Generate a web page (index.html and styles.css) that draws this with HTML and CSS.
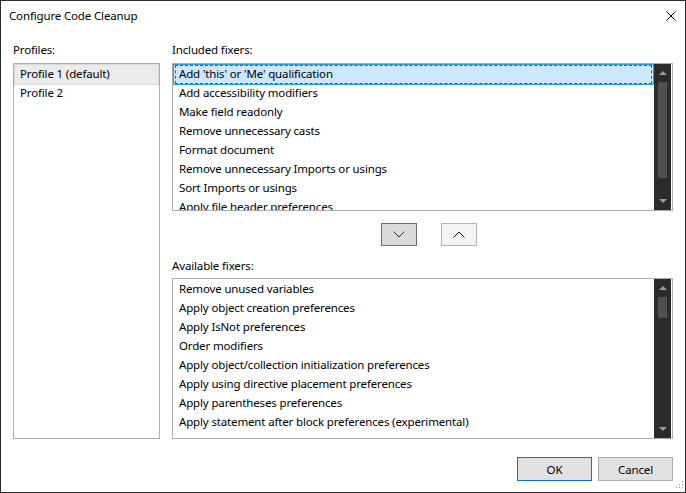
FILE: index.html
```html
<!DOCTYPE html>
<html>
<head>
<meta charset="utf-8">
<title>Configure Code Cleanup</title>
<link rel="stylesheet" href="styles.css">
</head>
<body>
<div class="window">
  <div class="titlebar">
    <span class="title">Configure Code Cleanup</span>
    <svg class="close" width="10" height="10" viewBox="0 0 10 10"><path d="M0.5 0.5 L9.5 9.5 M9.5 0.5 L0.5 9.5" stroke="#000" stroke-width="1" fill="none"/></svg>
  </div>
  <div class="main">
    <div class="col-left">
      <div class="label">Profiles:</div>
      <div class="list list-profiles">
        <div class="items">
          <div class="row row-sel-gray">Profile 1 (default)</div>
          <div class="row">Profile 2</div>
        </div>
      </div>
    </div>
    <div class="col-right">
      <div class="label">Included fixers:</div>
      <div class="list list-included">
        <div class="items">
          <div class="row row-sel-blue"><span class="focus">Add 'this' or 'Me' qualification</span></div>
          <div class="row">Add accessibility modifiers</div>
          <div class="row">Make field readonly</div>
          <div class="row">Remove unnecessary casts</div>
          <div class="row">Format document</div>
          <div class="row">Remove unnecessary Imports or usings</div>
          <div class="row">Sort Imports or usings</div>
          <div class="row">Apply file header preferences</div>
        </div>
        <div class="scrollbar">
          <div class="arrow arrow-up"></div>
          <div class="track track-included"><div class="thumb thumb-included"></div></div>
          <div class="arrow arrow-down"></div>
        </div>
      </div>
      <div class="move-row">
        <button class="move move-down"><svg width="12" height="7" viewBox="0 0 12 7"><path d="M0.5 0.5 L6 6 L11.5 0.5" stroke="#333" fill="none" stroke-width="1"/></svg></button>
        <button class="move move-up"><svg width="12" height="7" viewBox="0 0 12 7"><path d="M0.5 6.5 L6 1 L11.5 6.5" stroke="#111" fill="none" stroke-width="1"/></svg></button>
      </div>
      <div class="label label-avail">Available fixers:</div>
      <div class="list list-available">
        <div class="items">
          <div class="row">Remove unused variables</div>
          <div class="row">Apply object creation preferences</div>
          <div class="row">Apply IsNot preferences</div>
          <div class="row">Order modifiers</div>
          <div class="row">Apply object/collection initialization preferences</div>
          <div class="row">Apply using directive placement preferences</div>
          <div class="row">Apply parentheses preferences</div>
          <div class="row">Apply statement after block preferences (experimental)</div>
        </div>
        <div class="scrollbar">
          <div class="arrow arrow-up"></div>
          <div class="track track-available"><div class="thumb thumb-available"></div></div>
          <div class="arrow arrow-down"></div>
        </div>
      </div>
    </div>
  </div>
  <div class="footer">
    <button class="btn btn-default">OK</button>
    <button class="btn">Cancel</button>
    <svg class="grip" width="10" height="10" viewBox="0 0 10 10">
      <rect x="8" y="0" width="1" height="1" fill="#999"/>
      <rect x="5" y="3" width="1" height="1" fill="#999"/>
      <rect x="8" y="3" width="1" height="1" fill="#999"/>
      <rect x="2" y="6" width="1" height="1" fill="#999"/>
      <rect x="5" y="6" width="1" height="1" fill="#999"/>
      <rect x="8" y="6" width="1" height="1" fill="#999"/>
    </svg>
  </div>
</div>
</body>
</html>
```
FILE: styles.css
```css
html, body {
  margin: 0;
  padding: 0;
  background: #fff;
}
.window {
  position: relative;
  width: 686px;
  height: 493px;
  box-sizing: border-box;
  border: 1px solid #2b2b2b;
  background: #fff;
  display: flex;
  flex-direction: column;
  font-family: "Noto Sans", "Open Sans", sans-serif;
  font-size: 11.5px;
  letter-spacing: -0.15px;
  color: #000;
}
.titlebar {
  height: 30px;
  display: flex;
  align-items: center;
  justify-content: space-between;
  padding: 0 9px 0 8px;
  flex: none;
}
.title {
  line-height: 16px;
}
.close {
  display: block;
}
.main {
  display: flex;
  gap: 12px;
  padding: 11px 12px 0 12px;
  flex: none;
}
.col-left {
  width: 147px;
  display: flex;
  flex-direction: column;
}
.col-right {
  width: 501px;
  display: flex;
  flex-direction: column;
}
.label {
  height: 16px;
  line-height: 15px;
  margin-bottom: 5px;
}
.label-avail {
  margin-top: 12px;
  margin-bottom: 4px;
}
.list {
  box-sizing: border-box;
  border: 1px solid #acacac;
  display: flex;
  overflow: hidden;
}
.list-profiles {
  height: 376px;
}
.list-included {
  height: 148px;
}
.list-available {
  height: 161px;
}
.items {
  flex: 1;
  padding-top: 1px;
  overflow: hidden;
  min-width: 0;
}
.row {
  height: 19px;
  line-height: 18px;
  padding-left: 6px;
  white-space: nowrap;
  box-sizing: border-box;
}
.row-sel-gray {
  background: #ebebeb;
  box-shadow: 0 0 0 1px #dadada;
  margin: 0 1px;
  padding-left: 5px;
}
.row-sel-blue {
  background: #cce8ff;
  box-shadow: 0 0 0 1px #26a0da;
  margin: 0 1px 0 1px;
  padding-left: 3px;
  position: relative;
}
.row-sel-blue::after {
  content: "";
  position: absolute;
  left: 1px;
  right: 1px;
  top: 0;
  bottom: 0;
  border: 1px dashed #555;
}
.focus {
  padding-left: 2px;
}
.scrollbar {
  width: 17px;
  margin-right: 1px;
  background: #2b2b2b;
  display: flex;
  flex-direction: column;
  align-items: center;
  flex: none;
}
.arrow {
  width: 0;
  height: 0;
  flex: none;
}
.arrow-up {
  margin-top: 7px;
  border-left: 4.5px solid transparent;
  border-right: 4.5px solid transparent;
  border-bottom: 4px solid #9a9a9a;
}
.arrow-down {
  margin-bottom: 7px;
  border-left: 4.5px solid transparent;
  border-right: 4.5px solid transparent;
  border-top: 4px solid #9a9a9a;
}
.track {
  flex: 1;
  width: 9px;
  padding-top: 7px;
}
.thumb {
  width: 9px;
  background: #4f4f4f;
}
.thumb-included {
  height: 96px;
}
.thumb-available {
  height: 21px;
}
.move-row {
  display: flex;
  gap: 24px;
  padding-left: 209px;
  margin-top: 12px;
  height: 23px;
}
.move {
  width: 36px;
  height: 23px;
  box-sizing: border-box;
  padding: 0;
  display: flex;
  align-items: center;
  justify-content: center;
}
.move svg {
  display: block;
}
.move-down {
  background: #dadada;
  border: 1px solid #6d6d6d;
}
.move-up {
  background: #f4f4f4;
  border: 1px solid #b5b5b5;
}
.footer {
  display: flex;
  justify-content: flex-end;
  gap: 6px;
  padding: 18px 12px 0 0;
  flex: none;
}
.btn {
  width: 75px;
  height: 24px;
  box-sizing: border-box;
  background: #e1e1e1;
  border: 1px solid #adadad;
  font-family: "Noto Sans", "Open Sans", sans-serif;
  font-size: 11.5px;
  letter-spacing: -0.15px;
  color: #000;
  padding: 0;
}
.btn-default {
  border-color: #0078d7;
}
.grip {
  position: absolute;
  right: 1px;
  bottom: 1px;
}
```
